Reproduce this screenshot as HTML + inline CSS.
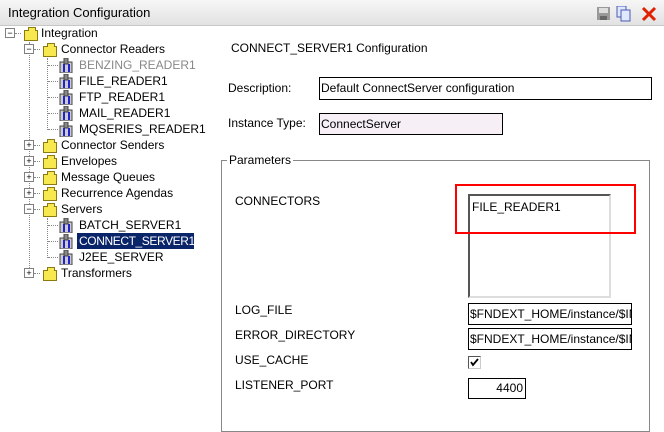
<!DOCTYPE html><html><head><style>
body{margin:0;width:664px;height:420px;background:#fff;font-family:"Liberation Sans",sans-serif;font-size:12px;color:#000;position:relative;overflow:hidden}
.a{position:absolute;white-space:nowrap}
.tb{position:absolute;left:0;top:0;width:664px;height:25px;background:linear-gradient(#f6f6f6,#e2e2e2);border-bottom:1px solid #c8c8c8}
.exp{position:absolute;width:8px;height:8px;border:1px solid #808080;background:#fff;font-size:9px;line-height:8px;text-align:center}
.fold{position:absolute;width:12px;height:9px;background:#f8e850;border:1px solid #8a7a10}
.fold:before{content:"";position:absolute;left:3px;top:-4px;width:6px;height:3px;background:#f8e850;border:1px solid #8a7a10;border-bottom:none}
.srv{position:absolute;width:14px;height:15px}
.box{position:absolute;border:1px solid #000;background:#fff;line-height:20px;padding-left:1px;overflow:hidden}
.dot{position:absolute;border-left:1px dotted #888}
.doth{position:absolute;border-top:1px dotted #888}
</style></head><body>
<div class="tb"></div>
<div class="a" style="left:8px;top:5px;font-size:13px">Integration Configuration</div>
<svg class="a" style="left:596px;top:6px" width="68" height="16">
<rect x="1" y="1" width="13" height="13" fill="#999"/><rect x="3" y="2" width="9" height="5" fill="#ddd"/><rect x="4" y="10" width="7" height="4" fill="#666"/>
<rect x="21" y="0" width="9" height="11" fill="#dfe8ff" stroke="#4a5ab0"/><rect x="25" y="4" width="9" height="11" fill="#dfe8ff" stroke="#4a5ab0"/>
<path d="M47 2 L59 14 M59 2 L47 14" stroke="#e02000" stroke-width="3"/>
</svg>
<div class="a" style="left:77px;top:233px;width:117px;height:16px;background:#0a246a"></div>
<div class="dot" style="left:29px;top:42px;height:232px"></div>
<div class="dot" style="left:47px;top:58px;height:72px"></div>
<div class="dot" style="left:47px;top:218px;height:40px"></div>
<div id="tree"></div>
<script>
var rows=[[0,"Integration",33,"m"],[1,"Connector Readers",49,"m"],[2,"BENZING_READER1",65,"s","#888"],[2,"FILE_READER1",81,"s"],[2,"FTP_READER1",97,"s"],[2,"MAIL_READER1",113,"s"],[2,"MQSERIES_READER1",129,"s"],[1,"Connector Senders",145,"p"],[1,"Envelopes",161,"p"],[1,"Message Queues",177,"p"],[1,"Recurrence Agendas",193,"p"],[1,"Servers",209,"m"],[2,"BATCH_SERVER1",225,"s"],[2,"CONNECT_SERVER1",241,"s","#fff"],[2,"J2EE_SERVER",257,"s"],[1,"Transformers",273,"p"]];
var h="";rows.forEach(function(r){var l=r[0],y=r[2];var ex=5+l*19;
if(r[3]!="s"){h+='<div class="exp" style="left:'+ex+'px;top:'+(y-5)+'px">'+(r[3]=="m"?"−":"+")+'</div>';h+='<div class="doth" style="left:'+(ex+10)+'px;top:'+y+'px;width:6px"></div>';h+='<div class="fold" style="left:'+(ex+19)+'px;top:'+(y-3)+'px"></div>';}
else{h+='<div class="doth" style="left:48px;top:'+y+'px;width:10px"></div>';h+='<svg class="srv" style="left:59px;top:'+(y-7)+'px" viewBox="0 0 14 15"><rect x="1" y="4" width="12" height="11" fill="#ccc" stroke="#444"/><rect x="5" y="0" width="4" height="6" fill="#888" stroke="#444"/><rect x="4" y="6" width="2" height="8" fill="#22c"/><rect x="9" y="6" width="2" height="8" fill="#22c"/></svg>';}
var tx=l==0?41:(l==1?61:79);
var ls=r[4]=="#fff"?"letter-spacing:-0.4px;":"";
h+='<div class="a" style="left:'+tx+'px;top:'+(y-7)+'px;font-size:12px;'+ls+'color:'+(r[4]||"#000")+'">'+r[1]+'</div>';});
document.getElementById("tree").innerHTML=h;
</script>
<div class="a" style="left:231px;top:41px">CONNECT_SERVER1 Configuration</div>
<div class="a" style="left:228px;top:81px">Description:</div>
<div class="box" style="left:319px;top:77px;width:330px;height:21px">Default ConnectServer configuration</div>
<div class="a" style="left:228px;top:116px">Instance Type:</div>
<div class="box" style="left:319px;top:113px;width:181px;height:20px;background:#f6f0f6">ConnectServer</div>
<div class="a" style="left:221px;top:160px;width:427px;height:270px;border:1px solid #888"></div>
<div class="a" style="left:227px;top:153px;background:#fff;padding:0 2px">Parameters</div>
<div class="a" style="left:235px;top:194px">CONNECTORS</div>
<div class="a" style="left:468px;top:194px;width:139px;height:100px;border:2px solid;border-color:#555 #ddd #ddd #555;background:#fff"><div style="padding:4px 0 0 2px">FILE_READER1</div></div>
<div class="a" style="left:455px;top:184px;width:177px;height:46px;border:2px solid #f00"></div>
<div class="a" style="left:235px;top:303px">LOG_FILE</div>
<div class="box" style="left:468px;top:303px;width:161px;height:20px">$FNDEXT_HOME/instance/$INSTANCE</div>
<div class="a" style="left:235px;top:328px">ERROR_DIRECTORY</div>
<div class="box" style="left:468px;top:328px;width:161px;height:20px">$FNDEXT_HOME/instance/$INSTANCE</div>
<div class="a" style="left:235px;top:353px">USE_CACHE</div>
<svg class="a" style="left:468px;top:356px" width="13" height="13"><rect x="0.5" y="0.5" width="12" height="12" fill="#fff" stroke="#ccc"/><path d="M0.5 12.5V0.5H12.5" fill="none" stroke="#555"/><path d="M3 6 L5 9 L10 3" fill="none" stroke="#000" stroke-width="1.8"/></svg>
<div class="a" style="left:235px;top:378px">LISTENER_PORT</div>
<div class="box" style="left:468px;top:378px;width:53px;height:19px;text-align:right;padding-right:2px;line-height:19px">4400</div>
</body></html>
